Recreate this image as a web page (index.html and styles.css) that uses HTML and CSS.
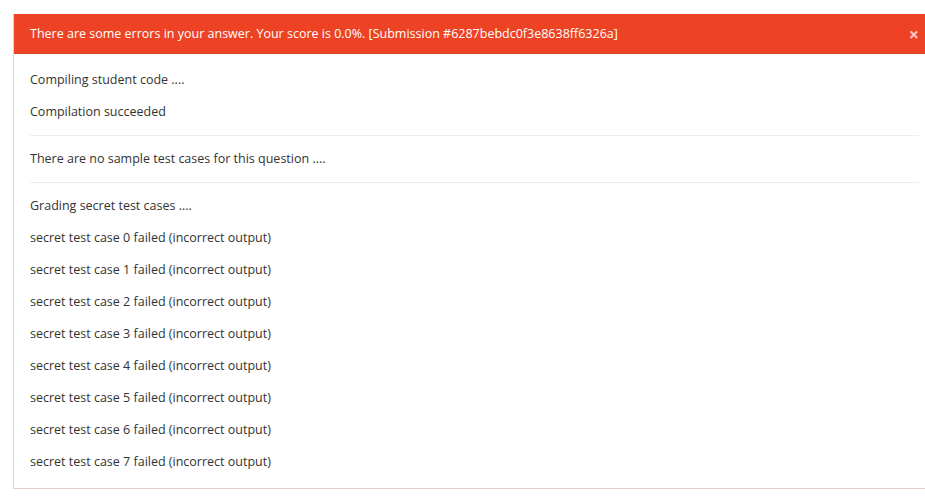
FILE: index.html
```html
<!DOCTYPE html>
<html lang="en">
<head>
    <meta charset="UTF-8"/>
    <title>Submission Result</title>
    <link rel="stylesheet" href="styles.css">
</head>
<body>
    <div class="result-panel">
        <div class="result-header">
            <span class="result-title">There are some errors in your answer. Your score is 0.0%. [Submission #6287bebdc0f3e8638ff6326a]</span>
            <span class="close-btn">&times;</span>
        </div>
        <div class="result-body">
            <div class="section">
                <p class="line">Compiling student code ....</p>
                <p class="line">Compilation succeeded</p>
            </div>
            <hr class="divider">
            <div class="section">
                <p class="line">There are no sample test cases for this question ....</p>
            </div>
            <hr class="divider">
            <div class="section">
                <p class="line">Grading secret test cases ....</p>
                <p class="line">secret test case 0 failed (incorrect output)</p>
                <p class="line">secret test case 1 failed (incorrect output)</p>
                <p class="line">secret test case 2 failed (incorrect output)</p>
                <p class="line">secret test case 3 failed (incorrect output)</p>
                <p class="line">secret test case 4 failed (incorrect output)</p>
                <p class="line">secret test case 5 failed (incorrect output)</p>
                <p class="line">secret test case 6 failed (incorrect output)</p>
                <p class="line">secret test case 7 failed (incorrect output)</p>
            </div>
        </div>
    </div>
</body>
</html>
```

FILE: styles.css
```css
html {
    overflow: hidden;
}
body {
    margin: 0;
    padding: 14px 0 0 13px;
    background: #ffffff;
    color: #333333;
    font-family: "Open Sans", Arial, sans-serif;
    font-size: 12.5px;
}
.result-panel {
    width: 924px;
    border: 1px solid #e6cfc9;
    border-top: none;
    background: #fff;
}
.result-header {
    display: flex;
    align-items: center;
    justify-content: space-between;
    height: 40px;
    padding: 1px 19px 0 16px;
    background: #ee4224;
    border-bottom: 1px solid #d9472d;
    color: #fff;
    box-sizing: border-box;
}
.result-title {
    line-height: 20px;
}
.close-btn {
    font-size: 18px;
    font-weight: bold;
    line-height: 1;
    color: #fff;
    opacity: 0.7;
}
.result-body {
    padding: 16px 19px 16px 16px;
}
.line {
    margin: 0 0 12px;
    line-height: 20px;
}
.section .line:last-child {
    margin-bottom: 0;
}
.divider {
    margin: 13px 0;
    border: none;
    border-top: 1px solid #eeeeee;
}
```
